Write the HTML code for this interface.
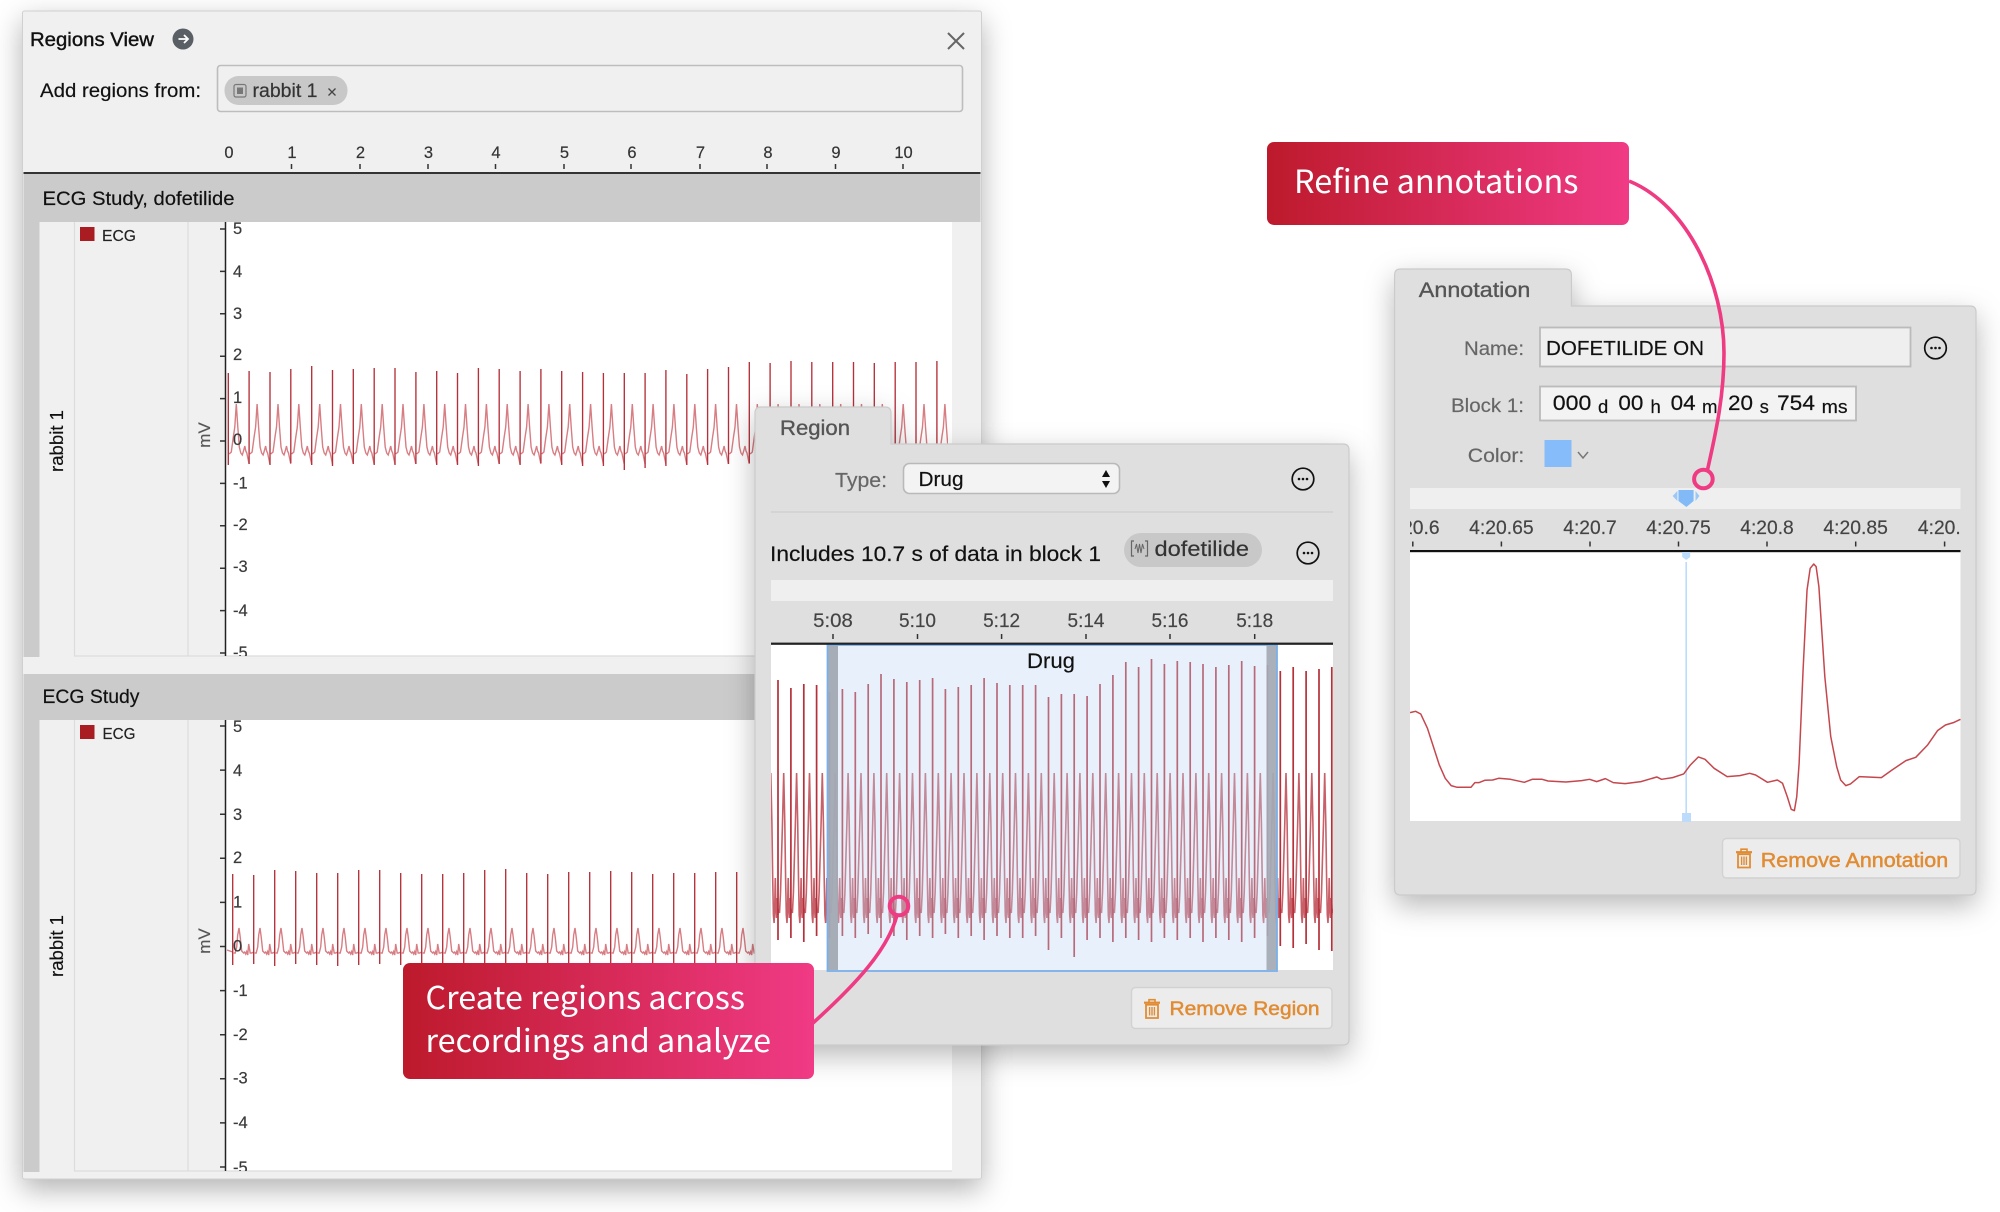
<!DOCTYPE html>
<html lang="en">
<head>
<meta charset="utf-8">
<title>Regions View</title>
<style>
html,body{margin:0;padding:0;background:#fff}
svg{display:block}
text{font-family:"Liberation Sans",sans-serif;fill:currentColor;stroke:currentColor;stroke-width:.18}
.call{font-family:"Noto Sans CJK JP","Liberation Sans",sans-serif;color:#fff;stroke-width:0}
.ax{font-size:16.5px;color:#3a3a3a}
.rl{font-size:16.5px;color:#333;text-anchor:middle}
.rr{font-size:19px;color:#444;text-anchor:middle}
.lb{font-size:19.5px;color:#666}
.or{color:#e18c33;stroke-width:.5}
.tk{stroke:#333;stroke-width:1.5;fill:none}
.circ{fill:none;stroke:#111;stroke-width:1.7}
.t1{fill:none;stroke:#cf6168;stroke-width:1.4;opacity:.82}
.sp{fill:none;stroke:#b5303a;stroke-width:1.35}
</style>
</head>
<body>
<svg xmlns="http://www.w3.org/2000/svg" width="2000" height="1212" viewBox="0 0 2000 1212">
<defs>
<path id="a" d="M.8 2L3 0L5-15L6.5-25L8-48L9.5-25L11-5L12.5 1L14 3L15.5-2L16.5-6L17.5-1L18.5 1L20.8 12"/>
<path id="b" d="M1 1L2.5 1L4-5L5-17L6.3-24L7.5-15L9-1L11 1L12 0L13 2L14-.5L15 3L16-8L17.5 1L19 1L21 0"/>
<path id="r" d="M.5 6L1.5 10L2.5-10L3.5-45L4.5-80L5.7-130L6.8-80L7.6-25L8.3 12L9 20L9.6 5L10.2-25L10.8 5L11.3 15L11.9-5L12.9 12"/>
<g id="trash" fill="none" stroke="#e18c33">
<path d="M0 4.2H16" stroke-width="2.2"/>
<path d="M5 4V1.2H11V4" stroke-width="1.6"/>
<path d="M2 6.2H14V19.5H2Z" stroke-width="1.8"/>
<path d="M5.6 8.5V17M8 8.5V17M10.4 8.5V17" stroke-width="1.4"/>
</g>
<g id="dots"><circle cx="-4" cy="0" r="1.3" fill="#111"/><circle cx="0" cy="0" r="1.3" fill="#111"/><circle cx="4" cy="0" r="1.3" fill="#111"/></g>
<clipPath id="c1"><rect x="188" y="222" width="764" height="434"/></clipPath>
<clipPath id="c2"><rect x="188" y="720" width="764" height="451"/></clipPath>
<clipPath id="t1c"><rect x="227" y="222" width="721" height="434"/></clipPath>
<clipPath id="rc"><rect x="771" y="645" width="562" height="325"/></clipPath>
<clipPath id="ac"><rect x="1410" y="510" width="550.5" height="40"/></clipPath>
<linearGradient id="g" x1="0" x2="1" y1="0" y2="0"><stop offset="0" stop-color="#bd1a2c"/><stop offset="1" stop-color="#f03a85"/></linearGradient>
</defs>

<!-- main window -->
<rect x="22.5" y="11" width="959" height="1168" rx="2" fill="#f0f0f0" stroke="#d0d0d0" stroke-width="1" style="filter:drop-shadow(0 10px 14px rgba(0,0,0,.3))"/>
<text x="30" y="46" font-size="19.5" textLength="124" lengthAdjust="spacingAndGlyphs" color="#111" style="stroke-width:.4">Regions View</text>
<circle cx="183" cy="39" r="10.5" fill="#5a5f66"/>
<path d="M178.5 39H187.5M184 35L188 39L184 43" fill="none" stroke="#fff" stroke-width="1.8"/>
<path d="M948 33L964 49M964 33L948 49" stroke="#666" stroke-width="2"/>
<text x="40" y="97" font-size="19.5" textLength="161" lengthAdjust="spacingAndGlyphs" color="#111">Add regions from:</text>
<rect x="217.5" y="65.5" width="745" height="46" rx="3" fill="#f0f0f0" stroke="#bdbdbd" stroke-width="1.6"/>
<rect x="224.5" y="76" width="123" height="29" rx="14" fill="#c8c8c8"/>
<rect x="234" y="84.5" width="12" height="12.5" rx="2" fill="none" stroke="#777" stroke-width="1.2"/>
<rect x="237" y="87.5" width="6" height="6.5" fill="#777"/>
<text x="252.5" y="97" font-size="19" textLength="65" lengthAdjust="spacingAndGlyphs" color="#333">rabbit 1</text>
<path d="M328.5 88.5L335.5 95.5M335.5 88.5L328.5 95.5" stroke="#444" stroke-width="1.3"/>

<text class="rl" x="229" y="158">0</text><text class="rl" x="292" y="158">1</text><text class="rl" x="360.5" y="158">2</text><text class="rl" x="428.5" y="158">3</text><text class="rl" x="496" y="158">4</text><text class="rl" x="564.5" y="158">5</text><text class="rl" x="632" y="158">6</text><text class="rl" x="700.5" y="158">7</text><text class="rl" x="768" y="158">8</text><text class="rl" x="836" y="158">9</text><text class="rl" x="903.5" y="158">10</text>
<path class="tk" d="M291.5 164v5M360 164v5M428 164v5M495.5 164v5M564 164v5M631 164v5M700 164v5M767 164v5M835.5 164v5M903 164v5"/>
<rect x="23.5" y="172" width="957" height="2" fill="#333"/>

<!-- row 1 -->
<rect x="23.5" y="174" width="957" height="48" fill="#cbcbcb"/>
<text x="42.5" y="205" font-size="19.5" textLength="192" lengthAdjust="spacingAndGlyphs" color="#111">ECG Study, dofetilide</text>
<rect x="23.5" y="222" width="16" height="435" fill="#cbcbcb"/>
<rect x="225" y="222" width="727" height="434" fill="#fff"/>
<path d="M74.5 222V656H952M188 222V656" fill="none" stroke="#dcdcdc" stroke-width="1.2"/>
<rect x="80" y="227" width="14.5" height="14" fill="#a81c22"/>
<text x="102" y="241" font-size="16" textLength="34" lengthAdjust="spacingAndGlyphs" color="#222">ECG</text>
<text transform="translate(63,441) rotate(-90)" text-anchor="middle" font-size="18.5" textLength="62" lengthAdjust="spacingAndGlyphs" color="#111">rabbit 1</text>
<text transform="translate(210,435) rotate(-90)" text-anchor="middle" font-size="17" textLength="25.5" lengthAdjust="spacingAndGlyphs" color="#555">mV</text>
<g clip-path="url(#t1c)">
<g class="t1"><use href="#a" x="228.3" y="452"/><use href="#a" x="249.1" y="452"/><use href="#a" x="270" y="452"/><use href="#a" x="290.8" y="452"/><use href="#a" x="311.7" y="452"/><use href="#a" x="332.5" y="452"/><use href="#a" x="353.3" y="452"/><use href="#a" x="374.2" y="452"/><use href="#a" x="395" y="452"/><use href="#a" x="415.9" y="452"/><use href="#a" x="436.7" y="452"/><use href="#a" x="457.5" y="452"/><use href="#a" x="478.4" y="452"/><use href="#a" x="499.2" y="452"/><use href="#a" x="520.1" y="452"/><use href="#a" x="540.9" y="452"/><use href="#a" x="561.7" y="452"/><use href="#a" x="582.6" y="452"/><use href="#a" x="603.4" y="452"/><use href="#a" x="624.3" y="452"/><use href="#a" x="645.1" y="452"/><use href="#a" x="665.9" y="452"/><use href="#a" x="686.8" y="452"/><use href="#a" x="707.6" y="452"/><use href="#a" x="728.5" y="452"/><use href="#a" x="749.3" y="452"/><use href="#a" x="770.1" y="452"/><use href="#a" x="791" y="452"/><use href="#a" x="811.8" y="452"/><use href="#a" x="832.7" y="452"/><use href="#a" x="853.5" y="452"/><use href="#a" x="874.3" y="452"/><use href="#a" x="895.2" y="452"/><use href="#a" x="916" y="452"/><use href="#a" x="936.9" y="452"/></g>
<path class="sp" d="M228.3 465V373M249.1 464V371M270 465V372M290.8 463V369M311.7 465V366M332.5 466V370M353.3 464V369M374.2 465V368M395 465V368M415.9 464V372M436.7 465V371M457.5 465V373M478.4 466V368M499.2 464V369M520.1 465V371M540.9 463V369M561.7 465V371M582.6 466V372M603.4 466V373M624.3 470V373M645.1 468V373M665.9 466V370M686.8 465V374M707.6 465V369M728.5 464V367M749.3 463V362M770.1 465V363M791 464V361M811.8 465V362M832.7 464V362M853.5 465V362M874.3 464V363M895.2 465V362M916 464V362M936.9 465V361"/>
</g>
<g clip-path="url(#c1)">
<text class="ax" x="233" y="234">5</text><text class="ax" x="233" y="277">4</text><text class="ax" x="233" y="319">3</text><text class="ax" x="233" y="360">2</text><text class="ax" x="233" y="403">1</text><text class="ax" x="233" y="445">0</text><text class="ax" x="233" y="488.5">-1</text><text class="ax" x="233" y="530">-2</text><text class="ax" x="233" y="572">-3</text><text class="ax" x="233" y="616">-4</text><text class="ax" x="233" y="658">-5</text>
</g>
<path d="M225.5 222V656" stroke="#222" stroke-width="1.5"/>
<path class="tk" d="M220 229h5M220 271.4h5M220 313.8h5M220 356.2h5M220 398.6h5M220 441h5M220 483.4h5M220 525.8h5M220 568.2h5M220 610.6h5M220 653h5"/>

<!-- row 2 -->
<rect x="23.5" y="674" width="957" height="46" fill="#cbcbcb"/>
<text x="42.5" y="703" font-size="19.5" textLength="97" lengthAdjust="spacingAndGlyphs" color="#111">ECG Study</text>
<rect x="23.5" y="720" width="16" height="452" fill="#cbcbcb"/>
<rect x="225" y="720" width="727" height="451" fill="#fff"/>
<path d="M74.5 720V1171H952M188 720V1171" fill="none" stroke="#dcdcdc" stroke-width="1.2"/>
<rect x="80" y="725" width="14.5" height="14" fill="#a81c22"/>
<text x="102.5" y="739" font-size="16" textLength="33" lengthAdjust="spacingAndGlyphs" color="#222">ECG</text>
<text transform="translate(63,946) rotate(-90)" text-anchor="middle" font-size="18.5" textLength="62" lengthAdjust="spacingAndGlyphs" color="#111">rabbit 1</text>
<text transform="translate(210,941) rotate(-90)" text-anchor="middle" font-size="17" textLength="25.5" lengthAdjust="spacingAndGlyphs" color="#555">mV</text>
<g class="t1">
<path d="M227 950L232.7 952"/>
<use href="#b" x="232.7" y="952"/><use href="#b" x="253.7" y="952"/><use href="#b" x="274.7" y="952"/><use href="#b" x="295.7" y="952"/><use href="#b" x="316.7" y="952"/><use href="#b" x="337.7" y="952"/><use href="#b" x="358.7" y="952"/><use href="#b" x="379.7" y="952"/><use href="#b" x="400.7" y="952"/><use href="#b" x="421.7" y="952"/><use href="#b" x="442.7" y="952"/><use href="#b" x="463.7" y="952"/><use href="#b" x="484.7" y="952"/><use href="#b" x="505.7" y="952"/><use href="#b" x="526.7" y="952"/><use href="#b" x="547.7" y="952"/><use href="#b" x="568.7" y="952"/><use href="#b" x="589.7" y="952"/><use href="#b" x="610.7" y="952"/><use href="#b" x="631.7" y="952"/><use href="#b" x="652.7" y="952"/><use href="#b" x="673.7" y="952"/><use href="#b" x="694.7" y="952"/><use href="#b" x="715.7" y="952"/><use href="#b" x="736.7" y="952"/>
</g>
<path class="sp" d="M232.7 965V874M253.7 964V875M274.7 966V870M295.7 964V871M316.7 965V873M337.7 966V873M358.7 965V870M379.7 964V870M400.7 965V873M421.7 964V874M442.7 965V874M463.7 966V873M484.7 965V870M505.7 965V869M526.7 966V873M547.7 965V874M568.7 966V872M589.7 965V872M610.7 964V871M631.7 965V872M652.7 965V874M673.7 966V873M694.7 965V873M715.7 965V872M736.7 965V872"/>
<g clip-path="url(#c2)">
<text class="ax" x="233" y="732">5</text><text class="ax" x="233" y="776">4</text><text class="ax" x="233" y="820">3</text><text class="ax" x="233" y="863">2</text><text class="ax" x="233" y="907.5">1</text><text class="ax" x="233" y="951.5">0</text><text class="ax" x="233" y="996">-1</text><text class="ax" x="233" y="1040">-2</text><text class="ax" x="233" y="1083.5">-3</text><text class="ax" x="233" y="1128">-4</text><text class="ax" x="233" y="1173">-5</text>
</g>
<path d="M225.5 720V1171" stroke="#222" stroke-width="1.5"/>
<path class="tk" d="M220 726h5M220 770.1h5M220 814.2h5M220 858.3h5M220 902.4h5M220 946.5h5M220 990.6h5M220 1034.7h5M220 1078.8h5M220 1122.9h5M220 1167h5"/>

<!-- Region panel -->
<path d="M755 1039V413Q755 407 761 407H885Q891 407 891 413V444H1343Q1349 444 1349 450V1039Q1349 1045 1343 1045H761Q755 1045 755 1039Z" fill="#dfdfdf" stroke="#cbcbcb" stroke-width="1.2" style="filter:drop-shadow(0 10px 14px rgba(0,0,0,.28))"/>
<text x="780" y="435" font-size="21" textLength="70" lengthAdjust="spacingAndGlyphs" color="#555" style="stroke-width:.35">Region</text>
<text x="835" y="487" font-size="20" textLength="52" lengthAdjust="spacingAndGlyphs" color="#666">Type:</text>
<rect x="903.5" y="463.5" width="216" height="30" rx="6" fill="#f3f3f3" stroke="#b9b9b9" stroke-width="1.6"/>
<text x="918.5" y="486" font-size="20" textLength="45" lengthAdjust="spacingAndGlyphs" color="#111">Drug</text>
<path d="M1106 470L1110 477H1102ZM1106 488L1110 481H1102Z" fill="#111"/>
<circle class="circ" cx="1303" cy="479" r="10.8"/><use href="#dots" x="1303" y="479"/>
<path d="M771 512H1333" stroke="#d0d0d0" stroke-width="1.4"/>
<text x="770" y="561" font-size="21" textLength="331" lengthAdjust="spacingAndGlyphs" color="#111">Includes 10.7 s of data in block 1</text>
<rect x="1124" y="533" width="138" height="34" rx="17" fill="#c8c8c8"/>
<path d="M1134 541h-2.5v15h2.5M1145 541h2.5v15h-2.5" fill="none" stroke="#666" stroke-width="1.2"/>
<path d="M1135 549l1.5-5 1.5 9 1.5-9 1.5 9 1.5-9 1.5 5" fill="none" stroke="#666" stroke-width="1"/>
<text x="1154.5" y="556" font-size="21" textLength="94.5" lengthAdjust="spacingAndGlyphs" color="#333">dofetilide</text>
<circle class="circ" cx="1308" cy="553" r="10.8"/><use href="#dots" x="1308" y="553"/>
<rect x="771" y="580" width="562" height="21" fill="#efefef"/>
<text class="rr" x="833" y="627" textLength="39.6" lengthAdjust="spacingAndGlyphs">5:08</text><text class="rr" x="917.5" y="627" textLength="37" lengthAdjust="spacingAndGlyphs">5:10</text><text class="rr" x="1001.6" y="627" textLength="37" lengthAdjust="spacingAndGlyphs">5:12</text><text class="rr" x="1086" y="627" textLength="37" lengthAdjust="spacingAndGlyphs">5:14</text><text class="rr" x="1170" y="627" textLength="37" lengthAdjust="spacingAndGlyphs">5:16</text><text class="rr" x="1254.7" y="627" textLength="37" lengthAdjust="spacingAndGlyphs">5:18</text>
<path class="tk" d="M833 634v5M917.5 634v5M1001.6 634v5M1086 634v5M1170 634v5M1254.7 634v5"/>
<rect x="771" y="645" width="562" height="325" fill="#fff"/>
<g clip-path="url(#rc)">
<g class="t1" style="opacity:.9;stroke-width:1.6;stroke:#c24f58">
<use href="#r" x="765.1" y="903"/><use href="#r" x="778" y="903"/><use href="#r" x="790.9" y="903"/><use href="#r" x="803.8" y="903"/><use href="#r" x="816.6" y="903"/><use href="#r" x="829.5" y="903"/><use href="#r" x="842.4" y="903"/><use href="#r" x="855.3" y="903"/><use href="#r" x="868.2" y="903"/><use href="#r" x="881" y="903"/><use href="#r" x="893.9" y="903"/><use href="#r" x="906.8" y="903"/><use href="#r" x="919.7" y="903"/><use href="#r" x="932.6" y="903"/><use href="#r" x="945.4" y="903"/><use href="#r" x="958.3" y="903"/><use href="#r" x="971.2" y="903"/><use href="#r" x="984.1" y="903"/><use href="#r" x="997" y="903"/><use href="#r" x="1009.8" y="903"/><use href="#r" x="1022.7" y="903"/><use href="#r" x="1035.6" y="903"/><use href="#r" x="1048.5" y="903"/><use href="#r" x="1061.4" y="903"/><use href="#r" x="1074.2" y="903"/><use href="#r" x="1087.1" y="903"/><use href="#r" x="1100" y="903"/><use href="#r" x="1112.9" y="903"/><use href="#r" x="1125.8" y="903"/><use href="#r" x="1138.6" y="903"/><use href="#r" x="1151.5" y="903"/><use href="#r" x="1164.4" y="903"/><use href="#r" x="1177.3" y="903"/><use href="#r" x="1190.2" y="903"/><use href="#r" x="1203" y="903"/><use href="#r" x="1215.9" y="903"/><use href="#r" x="1228.8" y="903"/><use href="#r" x="1241.7" y="903"/><use href="#r" x="1254.6" y="903"/><use href="#r" x="1267.4" y="903"/><use href="#r" x="1280.3" y="903"/><use href="#r" x="1293.2" y="903"/><use href="#r" x="1306.1" y="903"/><use href="#r" x="1319" y="903"/><use href="#r" x="1331.8" y="903"/>
</g>
<path class="sp" style="stroke-width:1.7" d="M765.1 938V680M778 940V680M790.9 938V688M803.8 942V684M816.6 936V685M829.5 938V692M842.4 936V689M855.3 938V692M868.2 934V684M881 938V674M893.9 936V679M906.8 940V682M919.7 936V680M932.6 938V678M945.4 934V689M958.3 938V687M971.2 936V685M984.1 940V678M997 936V683M1009.8 938V685M1022.7 938V685M1035.6 936V685M1048.5 950V697M1061.4 938V694M1074.2 957V694M1087.1 940V696M1100 938V684M1112.9 942V675M1125.8 938V662M1138.6 940V667M1151.5 942V659M1164.4 938V664M1177.3 940V661M1190.2 938V662M1203 942V664M1215.9 938V667M1228.8 940V665M1241.7 942V661M1254.6 938V666M1267.4 936V665M1280.3 946V671M1293.2 948V667M1306.1 944V671M1319 950V669M1331.8 951V667"/>
</g>
<rect x="828" y="645" width="449" height="325" fill="#bdd7f4" fill-opacity=".35"/>
<rect x="828" y="645" width="10" height="325" fill="#a3a9b3" fill-opacity=".95"/>
<rect x="1266.5" y="645" width="10" height="325" fill="#a3a9b3" fill-opacity=".9"/>
<rect x="827.5" y="645" width="449.5" height="326" fill="none" stroke="#7ab0ea" stroke-width="1.8"/>
<rect x="771" y="642.6" width="562" height="2.2" fill="#222"/>
<text x="1051" y="668" text-anchor="middle" font-size="21.5" textLength="48" lengthAdjust="spacingAndGlyphs" color="#111">Drug</text>
<rect x="1131.5" y="987.5" width="200.5" height="41" rx="4" fill="#ececec" stroke="#d2d2d2" stroke-width="1.4"/>
<use href="#trash" transform="translate(1144,998.5)"/>
<text class="or" x="1169.5" y="1015" font-size="19.5" textLength="150" lengthAdjust="spacingAndGlyphs">Remove Region</text>

<!-- Annotation panel -->
<path d="M1394.6 889V275Q1394.6 269 1400.6 269H1565.4Q1571.4 269 1571.4 275V306H1970Q1976 306 1976 312V889Q1976 895 1970 895H1400.6Q1394.6 895 1394.6 889Z" fill="#dfdfdf" stroke="#cbcbcb" stroke-width="1.2" style="filter:drop-shadow(0 10px 14px rgba(0,0,0,.28))"/>
<text x="1418.8" y="297" font-size="21" textLength="111.5" lengthAdjust="spacingAndGlyphs" color="#555" style="stroke-width:.35">Annotation</text>
<text class="lb" x="1464" y="355" textLength="60" lengthAdjust="spacingAndGlyphs">Name:</text>
<rect x="1540" y="327.5" width="370.5" height="39" fill="#efefef" stroke="#bbb" stroke-width="1.8"/>
<text x="1546" y="355" font-size="20.5" textLength="158" lengthAdjust="spacingAndGlyphs" color="#111">DOFETILIDE ON</text>
<circle class="circ" cx="1935.5" cy="348" r="10.8"/><use href="#dots" x="1935.5" y="348"/>
<text class="lb" x="1451" y="412" textLength="73" lengthAdjust="spacingAndGlyphs">Block 1:</text>
<rect x="1540" y="386.5" width="316" height="34" fill="#f3f3f3" stroke="#bbb" stroke-width="1.8"/>
<g font-size="21" color="#111">
<text x="1552.8" y="410" textLength="38.5" lengthAdjust="spacingAndGlyphs">000</text><text x="1618.4" y="410" textLength="25" lengthAdjust="spacingAndGlyphs">00</text><text x="1670.6" y="410" textLength="25" lengthAdjust="spacingAndGlyphs">04</text><text x="1728" y="410" textLength="25" lengthAdjust="spacingAndGlyphs">20</text><text x="1777" y="410" textLength="38" lengthAdjust="spacingAndGlyphs">754</text>
</g>
<g font-size="18.5" color="#111">
<text x="1598" y="413">d</text><text x="1650.5" y="413">h</text><text x="1702" y="413" textLength="15.5" lengthAdjust="spacingAndGlyphs">m</text><text x="1759.6" y="413">s</text><text x="1821.7" y="413" textLength="26" lengthAdjust="spacingAndGlyphs">ms</text>
</g>
<text class="lb" x="1467.8" y="462" textLength="56.5" lengthAdjust="spacingAndGlyphs">Color:</text>
<rect x="1544.5" y="440" width="27" height="27" fill="#86bcf9"/>
<path d="M1578 452L1583 458L1588 452" fill="none" stroke="#777" stroke-width="1.5"/>
<rect x="1410" y="488" width="550.5" height="21" fill="#efefef"/>
<path d="M1678.5 490H1693.6V501L1686.4 507L1678.5 501Z" fill="#82baf8"/>
<path d="M1672.6 496L1677.4 491V501ZM1699.5 496L1695.5 491V501Z" fill="#9cc8f8"/>
<g clip-path="url(#ac)">
<text class="rr" x="1412.8" y="534" textLength="53.5" lengthAdjust="spacingAndGlyphs">4:20.6</text><text class="rr" x="1501.4" y="534" textLength="64.5" lengthAdjust="spacingAndGlyphs">4:20.65</text><text class="rr" x="1590" y="534" textLength="53.5" lengthAdjust="spacingAndGlyphs">4:20.7</text><text class="rr" x="1678.5" y="534" textLength="64.5" lengthAdjust="spacingAndGlyphs">4:20.75</text><text class="rr" x="1767" y="534" textLength="53.5" lengthAdjust="spacingAndGlyphs">4:20.8</text><text class="rr" x="1855.7" y="534" textLength="64.5" lengthAdjust="spacingAndGlyphs">4:20.85</text><text class="rr" x="1944.7" y="534" textLength="53.5" lengthAdjust="spacingAndGlyphs">4:20.9</text>
</g>
<path class="tk" d="M1412.8 541.5v5M1501.4 541.5v5M1590 541.5v5M1678.5 541.5v5M1767 541.5v5M1855.7 541.5v5M1944.6 541.5v5"/>
<rect x="1410" y="552" width="550.5" height="269" fill="#fff"/>
<rect x="1410" y="550" width="550.5" height="2.2" fill="#111"/>
<path d="M1686.2 562V813" stroke="#bcdcfb" stroke-width="1.6"/>
<path d="M1682.2 552H1690.2V557L1686.2 560L1682.2 557Z" fill="#bddcfb"/>
<rect x="1682" y="813" width="9" height="9" fill="#bddcfb"/>
<g transform="translate(1380,520) scale(.3954,.3333)">
<polyline vector-effect="non-scaling-stroke" fill="none" stroke="#c5474e" stroke-width="1.5" stroke-linejoin="round" points="76,578 90,574 103,582 120,625 135,680 150,735 165,775 180,797 195,802 230,802 240,788 250,788 265,781 285,780 300,775 330,778 365,787 385,778 410,778 425,783 470,786 510,782 530,778 548,785 570,776 590,788 620,791 660,785 700,771 712,778 740,773 768,762 785,735 805,711 822,718 845,745 878,770 910,767 935,760 950,765 980,787 1005,780 1018,790 1030,830 1040,868 1048,872 1054,830 1060,730 1070,450 1080,210 1088,145 1097,132 1103,140 1110,200 1125,470 1140,650 1155,740 1165,780 1178,797 1190,792 1212,770 1268,773 1295,750 1330,722 1355,712 1385,675 1410,632 1430,615 1450,608 1468,598"/>
</g>
<rect x="1722.5" y="838.5" width="237.5" height="39.5" rx="4" fill="#ececec" stroke="#d2d2d2" stroke-width="1.4"/>
<use href="#trash" transform="translate(1736,848)"/>
<text class="or" x="1760.8" y="867" font-size="20" textLength="187.4" lengthAdjust="spacingAndGlyphs">Remove Annotation</text>

<!-- callouts -->
<path d="M1629 181C1688 205 1724 285 1724 353C1724 400 1714 440 1707.5 470" fill="none" stroke="#ef3b82" stroke-width="3.6"/>
<circle cx="1703.4" cy="479" r="9.3" fill="none" stroke="#ef3b82" stroke-width="4"/>
<rect x="1267" y="142" width="362" height="83" rx="7" fill="url(#g)"/>
<text class="call" x="1294" y="193" font-size="32" textLength="284.5" lengthAdjust="spacingAndGlyphs">Refine annotations</text>

<path d="M813 1023C855 985 888 950 897 915" fill="none" stroke="#ef3b82" stroke-width="3.6"/>
<circle cx="899" cy="906" r="9.3" fill="none" stroke="#ef3b82" stroke-width="4"/>
<rect x="403" y="963" width="411" height="116" rx="7" fill="url(#g)"/>
<text class="call" x="425.5" y="1009" font-size="31.5" textLength="319.5" lengthAdjust="spacingAndGlyphs">Create regions across</text>
<text class="call" x="425.5" y="1052" font-size="31.5" textLength="345.5" lengthAdjust="spacingAndGlyphs">recordings and analyze</text>
</svg>
</body>
</html>
